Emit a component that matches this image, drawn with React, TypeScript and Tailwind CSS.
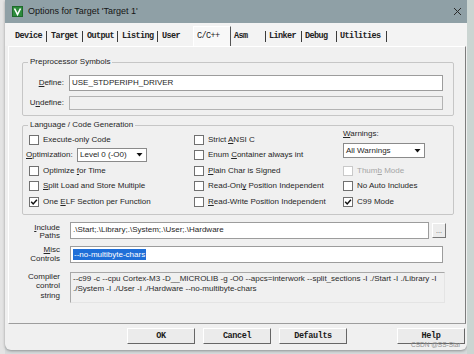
import React from 'react';

const Acc = ({ children }: { children: React.ReactNode }) => (
  <span className="underline underline-offset-[1px] decoration-[0.5px]">{children}</span>
);

const CheckMark = () => (
  <svg width="8" height="8" viewBox="0 0 8 8">
    <path d="M1.2 3.8 L3.2 5.9 L6.9 1.8" fill="none" stroke="#111" strokeWidth="1.5" />
  </svg>
);

const Arrow = () => (
  <svg width="7" height="6" viewBox="0 0 7 6">
    <path d="M0.5 1 H6.5 L3.5 4.5 Z" fill="#111" />
  </svg>
);

function Check({ children, checked, disabled }: { children: React.ReactNode; checked?: boolean; disabled?: boolean }) {
  return (
    <div className="flex h-[15.5px] items-center gap-[4px] whitespace-nowrap">
      <span
        className={`flex h-[10px] w-[10px] shrink-0 items-center justify-center border bg-white ${
          disabled ? 'border-[#c9c9c9]' : 'border-[#707070]'
        }`}
      >
        {checked && <CheckMark />}
      </span>
      <span className={disabled ? 'text-[#a6a6a6]' : 'text-[#262626]'}>{children}</span>
    </div>
  );
}

const tabs = [
  { label: 'Device', w: 'w-[36px]', sep: true },
  { label: 'Target', w: 'w-[36px]', sep: true },
  { label: 'Output', w: 'w-[35px]', sep: true },
  { label: 'Listing', w: 'w-[40px]', sep: true },
  { label: 'User', w: 'w-[35px]', sep: false },
];

const tabsRight = [
  { label: 'Asm', w: 'w-[35px]' },
  { label: 'Linker', w: 'w-[36px]' },
  { label: 'Debug', w: 'w-[35px]' },
  { label: 'Utilities', w: 'w-[50px]' },
];

const mono = "font-['Liberation_Mono','Courier_New',monospace] font-bold text-[8.5px]";

export default function App() {
  return (
    <div className="relative flex h-[354px] w-[474px] overflow-hidden bg-[#d7dbdc] font-['Liberation_Sans',Arial,sans-serif] text-[8px] text-[#262626]">
      <div className="w-[5px] bg-[#e4e4e4]" />

      <div className="flex h-[350px] w-[462px] flex-col rounded-b-[6px] bg-[#f0f0f0] shadow-[0_1px_3px_rgba(0,0,0,0.35)]">
        {/* title bar */}
        <div className="flex h-[23px] items-center bg-[#8fa0a6] pl-[7px] pr-[5px]">
          <svg width="11" height="11" viewBox="0 0 11 11">
            <rect width="11" height="11" fill="#2d8b3c" />
            <rect x="0.5" y="0.5" width="10" height="10" fill="none" stroke="#1d6a2a" />
            <path d="M2.5 2.5 L5.5 8.5 L8.5 2.5" fill="none" stroke="#fff" strokeWidth="1.6" />
          </svg>
          <span className="ml-[5px] text-[9px] text-[#151515]">Options for Target 'Target 1'</span>
          <svg className="ml-auto" width="9" height="9" viewBox="0 0 9 9">
            <path d="M1 1 L8 8 M8 1 L1 8" stroke="#2a2a2a" strokeWidth="1" />
          </svg>
        </div>

        {/* tab strip */}
        <div className={`flex h-[23px] items-end bg-[#f3f3f3] pl-[6px] ${mono} tracking-[-0.6px] text-[#222]`}>
          {tabs.map((t) => (
            <div key={t.label} className={`flex h-[19px] items-center justify-between pl-[4px] ${t.w}`}>
              <span>{t.label}</span>
              {t.sep && <span className="h-[11px] w-[1.5px] bg-[#3a3a3a]" />}
            </div>
          ))}
          <div className="flex h-[20px] w-[38px] items-center border-l border-t border-r border-l-white border-t-white border-r-[#555] bg-[#f8f8f8] pl-[3px] font-normal">
            C/C++
          </div>
          {tabsRight.map((t) => (
            <div key={t.label} className={`flex h-[19px] items-center justify-between pl-[3px] ${t.w}`}>
              <span>{t.label}</span>
              <span className="h-[11px] w-[1.5px] bg-[#3a3a3a]" />
            </div>
          ))}
        </div>

        {/* page */}
        <div className="ml-[3px] h-[278px] w-[458px] border border-l-white border-t-white border-r-[#7d7d7d] border-b-[#9d9d9d] pl-[13px] pr-[11px] pt-[10px]">
          <fieldset className="rounded-[2px] border border-[#c6c6c6] pb-[5px]">
            <legend className="ml-[5px] px-[2px] leading-[10px]">Preprocessor Symbols</legend>
            <div className="mt-[8px] grid grid-cols-[41px_374px] items-center gap-x-[5px] gap-y-[5px]">
              <span className="text-right">
                <Acc>D</Acc>efine:
              </span>
              <div className="flex h-[16px] items-center border border-[#9c9c9c] bg-white pl-[2px]">USE_STDPERIPH_DRIVER</div>
              <span className="text-right">
                U<Acc>n</Acc>define:
              </span>
              <div className="h-[14px] border border-[#b3b3b3] bg-[#f0f0f0]" />
            </div>
          </fieldset>

          <fieldset className="mt-[4px] rounded-[2px] border border-[#c6c6c6] pb-[4px]">
            <legend className="ml-[5px] px-[2px] leading-[10px]">Language / Code Generation</legend>
            <div className="mt-[2px] grid grid-cols-[165px_149px_1fr] pl-[6px]">
              <div className="flex flex-col">
                <Check>Execute-only Code</Check>
                <div className="-ml-[3px] flex h-[15.5px] items-center">
                  <span className="w-[51px]">
                    <Acc>O</Acc>ptimization:
                  </span>
                  <div className="flex h-[14px] w-[70px] items-center justify-between border border-[#8a8a8a] bg-white pl-[2px] pr-[2px]">
                    <span>Level 0 (-O0)</span>
                    <span className="flex h-[10px] w-[10px] items-center justify-center">
                      <Arrow />
                    </span>
                  </div>
                </div>
                <Check>
                  Optimize <Acc>f</Acc>or Time
                </Check>
                <Check>
                  <Acc>S</Acc>plit Load and Store Multiple
                </Check>
                <Check checked>
                  One <Acc>E</Acc>LF Section per Function
                </Check>
              </div>
              <div className="flex flex-col">
                <Check>
                  Strict <Acc>A</Acc>NSI C
                </Check>
                <Check>
                  Enum <Acc>C</Acc>ontainer always int
                </Check>
                <Check>
                  <Acc>P</Acc>lain Char is Signed
                </Check>
                <Check>
                  Read-Onl<Acc>y</Acc> Position Independent
                </Check>
                <Check>
                  <Acc>R</Acc>ead-Write Position Independent
                </Check>
              </div>
              <div className="flex flex-col">
                <span className="-mt-[4px] h-[12px] leading-[12px]">
                  <Acc>W</Acc>arnings:
                </span>
                <div className="mt-[3px] flex h-[15px] w-[82px] items-center justify-between border border-[#8a8a8a] bg-white pl-[2px] pr-[3px]">
                  <span>All Warnings</span>
                  <Arrow />
                </div>
                <div className="mt-[5px]">
                  <Check disabled>
                    Thum<Acc>b</Acc> Mode
                  </Check>
                </div>
                <Check>No Auto Includes</Check>
                <Check checked>C99 Mode</Check>
              </div>
            </div>
          </fieldset>

          {/* paths and controls */}
          <div className="mt-[7px] flex items-start">
            <span className="mt-[2px] w-[38px] text-right leading-[8.6px]">
              <Acc>I</Acc>nclude
              <br />
              Paths
            </span>
            <div className="ml-[10px] flex h-[17px] w-[359px] items-center overflow-hidden whitespace-nowrap border border-[#9c9c9c] bg-white pl-[2px]">
              .\Start;.\Library;.\System;.\User;.\Hardware
            </div>
            <div className="ml-[3px] mt-[1px] flex h-[15px] w-[14px] items-end justify-center border border-t-white border-l-white border-r-[#777] border-b-[#777] bg-[#ececec] pb-[3px] text-[7px] leading-[7px] text-[#555]">
              ...
            </div>
          </div>

          <div className="mt-[5px] flex items-start">
            <span className="-mt-[1px] w-[38px] text-right leading-[9.4px]">
              <Acc>M</Acc>isc
              <br />
              Controls
            </span>
            <div className="ml-[10px] flex h-[17px] w-[373px] items-center border border-[#9c9c9c] bg-white pl-[2px]">
              <span className="bg-[#1f6fd8] px-[1px] leading-[11px] text-white">--no-multibyte-chars</span>
            </div>
          </div>

          <div className="mt-[8px] flex items-start">
            <span className="w-[38px] text-right leading-[9.8px]">
              Compiler
              <br />
              control
              <br />
              string
            </span>
            <div className="ml-[10px] h-[31px] w-[375px] overflow-hidden border border-[#a8a8a8] border-r-[#e4e4e4] border-b-[#e4e4e4] pl-[2px] pt-[1px] text-[8px] leading-[10px] text-[#2a2a2a]">
              <div className="whitespace-nowrap">
                --c99 -c --cpu Cortex-M3 -D__MICROLIB -g -O0 --apcs=interwork --split_sections -I ./Start -I ./Library -I
              </div>
              <div className="whitespace-nowrap">./System -I ./User -I ./Hardware --no-multibyte-chars</div>
            </div>
          </div>
        </div>

        {/* buttons */}
        <div className={`mt-[4px] flex pl-[122px] ${mono} tracking-[-0.4px] text-[#1a1a1a]`}>
          {['OK', 'Cancel', 'Defaults'].map((b, i) => (
            <div
              key={b}
              className={`flex h-[16px] w-[68px] items-center justify-center border border-t-white border-l-white border-r-[#666] border-b-[#666] bg-[#ebebeb] ${
                i > 0 ? 'ml-[8px]' : ''
              }`}
            >
              {b}
            </div>
          ))}
          <div className="ml-[50px] flex h-[16px] w-[68px] items-center justify-center border border-t-white border-l-white border-r-[#666] border-b-[#666] bg-[#ebebeb]">
            Help
          </div>
        </div>
      </div>

      <div className="flex-1 bg-[#cbd5d2]" />

      <span className="absolute left-[411px] top-[341px] text-[6.5px] leading-[7px] text-[#8f8f8f]">CSDN @SS-Star</span>
    </div>
  );
}
